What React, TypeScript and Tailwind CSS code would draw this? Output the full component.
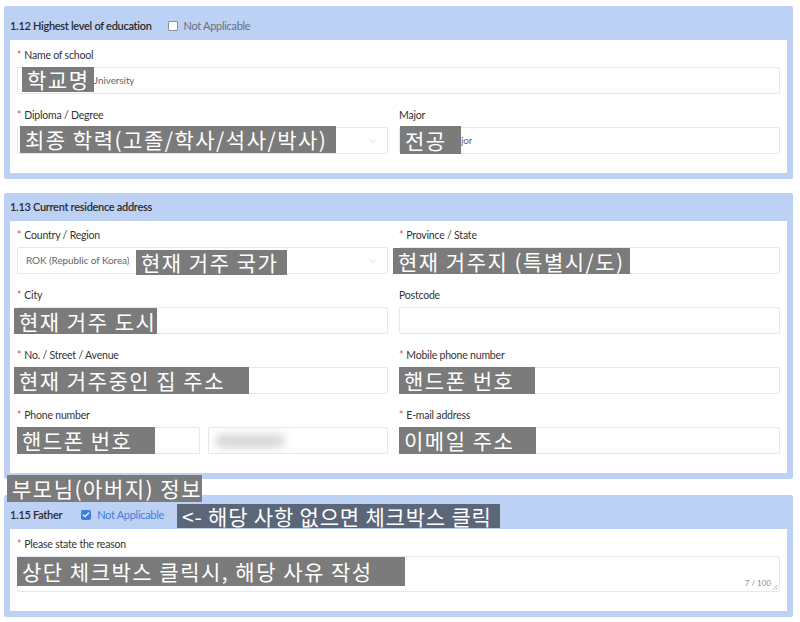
import { ChevronDown, Check } from "lucide-react";
import type { ReactNode } from "react";

function Label({ text, required }: { text: string; required?: boolean }) {
  return (
    <div className="flex h-4 translate-y-[2px] items-center text-[10.5px] tracking-[-0.2px] text-[#333]">
      {required && <span className="mr-[3px] text-[#e05252]">*</span>}
      {text}
    </div>
  );
}

function Box({ children, select, className = "" }: { children?: ReactNode; select?: boolean; className?: string }) {
  return (
    <div
      className={`flex h-[27px] items-center justify-between rounded-[2px] border border-[#e4e7eb] bg-white px-2 text-[10px] tracking-[-0.1px] text-[#666] ${className}`}
    >
      <span className="truncate">{children}</span>
      {select && <ChevronDown className="h-3 w-3 shrink-0 text-[#c4c8cc]" strokeWidth={1.5} />}
    </div>
  );
}

function Field({ label, required, children }: { label: string; required?: boolean; children: ReactNode }) {
  return (
    <div>
      <Label text={label} required={required} />
      <div className="mt-[5px]">{children}</div>
    </div>
  );
}

function Panel({ header, tall, children, className = "" }: { header: ReactNode; tall?: boolean; children: ReactNode; className?: string }) {
  return (
    <div className={`ml-[4px] w-[789px] rounded-[2px] bg-[#bdd1f5] px-[6px] pb-[6px] ${className}`}>
      <div className={`flex items-center ${tall ? "h-[34px] pt-[6px]" : "h-[28px]"}`}>{header}</div>
      <div className="bg-white px-[7px]">{children}</div>
    </div>
  );
}

function Note({ text, className, dark }: { text: string; className: string; dark?: boolean }) {
  return (
    <div
      className={`absolute flex items-center whitespace-nowrap px-[5px] font-['Noto_Sans_CJK_KR',sans-serif] text-[21px] leading-none text-white ${
        dark ? "bg-[#5c6679] tracking-[0.8px]" : "bg-[#7b7b7b] tracking-[1.5px]"
      } ${className}`}
    >
      {text}
    </div>
  );
}

export default function App() {
  return (
    <div className="relative h-[622px] w-[800px] overflow-hidden bg-white pt-[6px] font-['Lato',sans-serif]">
      <Panel
        tall
        header={
          <div className="flex items-center text-[11px] tracking-[-0.3px]">
            <span className="font-semibold text-[#2b2b2b]">1.12 Highest level of education</span>
            <span className="ml-[16px] h-[10px] w-[10px] rounded-[1px] border border-[#8a8f96] bg-white" />
            <span className="ml-[6px] text-[#6b7078]">Not Applicable</span>
          </div>
        }
      >
        <div className="flex flex-col gap-3 pt-[6px] pb-[19px]">
          <Field label="Name of school" required>
            <Box>Seoul National University</Box>
          </Field>
          <div className="grid grid-cols-[371px_381px] gap-[11px]">
            <Field label="Diploma / Degree" required>
              <Box select>Graduate or Graduate (will graduate)</Box>
            </Field>
            <Field label="Major">
              <Box>Studying major</Box>
            </Field>
          </div>
        </div>
      </Panel>

      <Panel
        className="mt-[14px]"
        header={<span className="text-[11px] font-semibold tracking-[-0.3px] text-[#2b2b2b]">1.13 Current residence address</span>}
      >
        <div className="grid grid-cols-[371px_381px] gap-x-[11px] gap-y-3 pt-[5px] pb-[19px]">
          <Field label="Country / Region" required>
            <Box select>ROK (Republic of Korea)</Box>
          </Field>
          <Field label="Province / State" required>
            <Box>Seoul</Box>
          </Field>
          <Field label="City" required>
            <Box>Seoul</Box>
          </Field>
          <Field label="Postcode">
            <Box />
          </Field>
          <Field label="No. / Street / Avenue" required>
            <Box />
          </Field>
          <Field label="Mobile phone number" required>
            <Box />
          </Field>
          <Field label="Phone number" required>
            <div className="flex gap-[8px]">
              <Box className="w-[183px]" />
              <div className="relative flex h-[27px] flex-1 items-center overflow-hidden rounded-[2px] border border-[#e4e7eb] bg-white">
                <div className="ml-[6px] h-[14px] w-[70px] rounded-full bg-[#d8d8d8] blur-[4px]" />
              </div>
            </div>
          </Field>
          <Field label="E-mail address" required>
            <Box>kim9011@naver.com</Box>
          </Field>
        </div>
      </Panel>

      <Panel
        tall
        className="mt-[16px]"
        header={
          <div className="flex items-center text-[11px] tracking-[-0.3px]">
            <span className="font-semibold text-[#2b2b2b]">1.15 Father</span>
            <span className="ml-[19px] flex h-[10px] w-[10px] items-center justify-center rounded-[2px] bg-[#3d7fe0]">
              <Check className="h-[8px] w-[8px] text-white" strokeWidth={3.5} />
            </span>
            <span className="ml-[6px] text-[#3d7fe0]">Not Applicable</span>
          </div>
        }
      >
        <div className="pt-[6px] pb-[19px]">
          <Field label="Please state the reason" required>
            <div className="relative h-[36px] rounded-[2px] border border-[#e4e7eb] bg-white px-2 pt-[6px] text-[10px] text-[#666]">
              Unknown
              <span className="absolute bottom-[2px] right-[8px] text-[8px] text-[#8a8a8a]">7 / 100</span>
              <svg className="absolute bottom-[1px] right-[1px] h-[6px] w-[6px]" viewBox="0 0 6 6">
                <path d="M5.5 1 L1 5.5 M5.5 3.5 L3.5 5.5" stroke="#999" strokeWidth="0.8" />
              </svg>
            </div>
          </Field>
        </div>
      </Panel>

      <Note text="학교명" className="left-[22px] top-[67px] h-[25px] w-[72px]" />
      <Note text="최종 학력(고졸/학사/석사/박사)" className="left-[20px] top-[126px] h-[27px] w-[316px]" />
      <Note text="전공" className="left-[400px] top-[126px] h-[28px] w-[61px]" />
      <Note text="현재 거주 국가" className="left-[136px] top-[250px] h-[25px] w-[151px]" />
      <Note text="현재 거주지 (특별시/도)" className="left-[393px] top-[248px] h-[26px] w-[237px]" />
      <Note text="현재 거주 도시" className="left-[14px] top-[308px] h-[26px] w-[143px]" />
      <Note text="현재 거주중인 집 주소" className="left-[14px] top-[367px] h-[27px] w-[235px]" />
      <Note text="핸드폰 번호" className="left-[399px] top-[367px] h-[27px] w-[136px]" />
      <Note text="핸드폰 번호" className="left-[17px] top-[427px] h-[27px] w-[138px]" />
      <Note text="이메일 주소" className="left-[399px] top-[427px] h-[27px] w-[137px]" />
      <Note text="부모님(아버지) 정보" className="left-[7px] top-[475px] h-[27px] w-[195px] bg-[#6e6e6e]" />
      <Note dark text="<- 해당 사항 없으면 체크박스 클릭" className="left-[177px] top-[504px] h-[24px] w-[323px]" />
      <Note text="상단 체크박스 클릭시, 해당 사유 작성" className="left-[17px] top-[557px] h-[29px] w-[388px]" />
    </div>
  );
}
